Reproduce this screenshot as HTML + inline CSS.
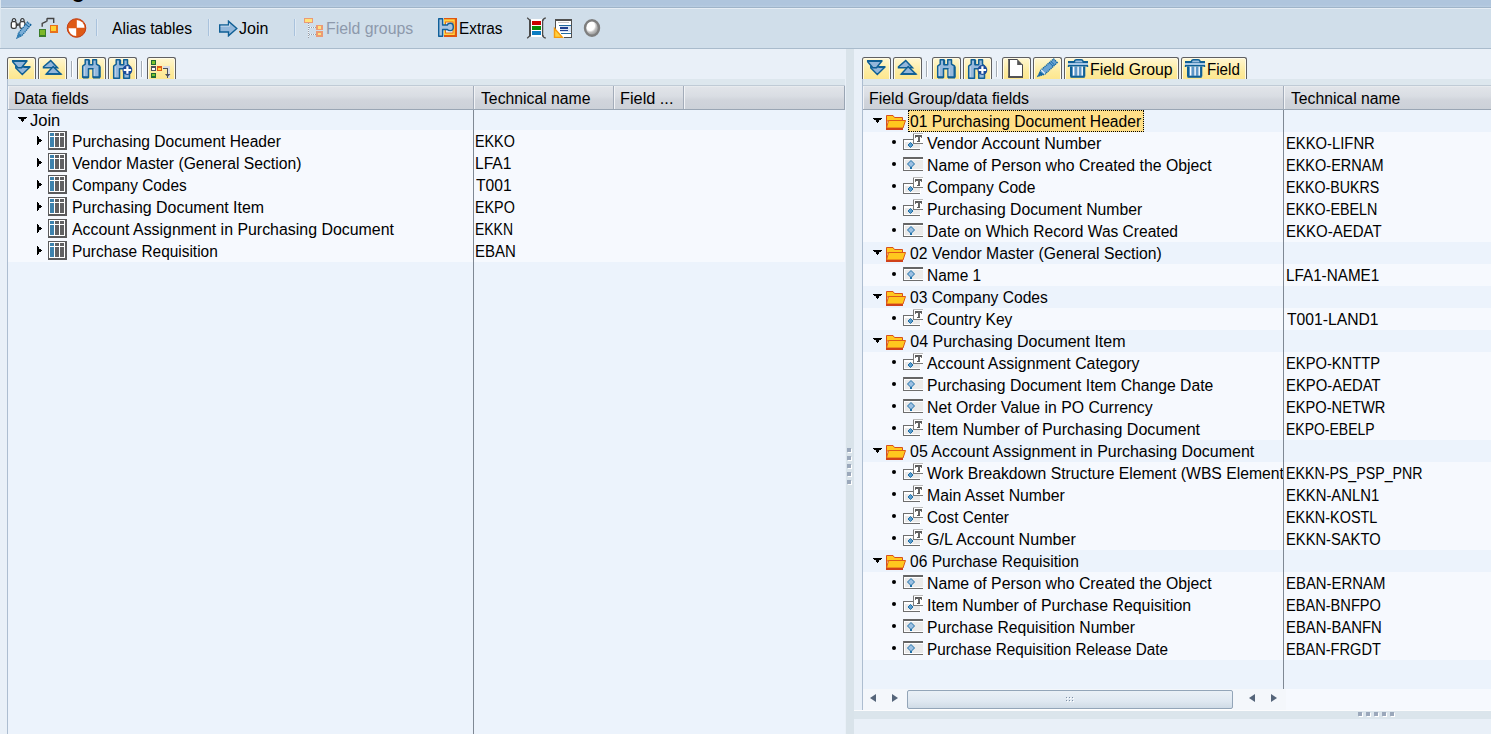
<!DOCTYPE html>
<html lang="en"><head><meta charset="utf-8"><title>InfoSet</title>
<style>
html,body{margin:0;padding:0}
body{width:1491px;height:734px;overflow:hidden;position:relative;background:#e9f0f8;font-family:"Liberation Sans","DejaVu Sans",sans-serif;font-size:16px;color:#000;}
i{display:block;position:absolute;font-style:normal}
svg{display:block}
.ic{position:absolute}
#titlebar{position:absolute;left:0;top:0;width:1491px;height:7px;background:linear-gradient(#afc5dd,#afc5dd 70%,#b9cde2);border-bottom:1px solid #9fb4c9;overflow:hidden}
#ttl{position:absolute;left:19.5px;top:-21.5px;font-size:21px;font-weight:bold;white-space:nowrap;line-height:24px}
#tb{position:absolute;left:0;top:8px;width:1491px;height:40px;background:#d0deea;border-bottom:1px solid #a9bbcc;box-shadow:inset 0 1px 0 #e6edf4}
#tb .ic{margin-top:-8px}
.tbt,.ht,.bl,.row .t,.row .k{transform-origin:0 0}
.tbt{position:absolute;top:11px;line-height:20px;white-space:nowrap}
.tbt.dis{color:#8d99ac}
.sep{top:11px;width:1px;height:17px;background:#a9c2dc;box-shadow:1px 0 0 #dfe9f3}
#lp{position:absolute;left:0;top:49px;width:846px;height:685px;overflow:hidden}
#rp{position:absolute;left:854px;top:49px;width:637px;height:685px;overflow:hidden}
#split{position:absolute;left:846px;top:49px;width:8px;height:685px;background:#d9e3ea}
#split i{left:1px;width:4px;height:4px;background:#9ba8bb;box-shadow:1px 1px 0 #fff}
.btn{position:absolute;top:8px;height:24px;box-sizing:border-box;border:1px solid #5f5f62;border-bottom:none;border-radius:2.5px 2.5px 0 0;background:linear-gradient(#fff7d2,#fdeb9e 60%,#fde58a);box-shadow:inset 1px 1px 0 #fffbe6,inset -1px 0 0 #fffbe6;white-space:nowrap}
.btn .bi{position:absolute;left:0;top:0}
.btn .bl{position:absolute;top:2px;line-height:20px}
.bsep{top:12px;width:1px;height:16px;background:#a3abb4;box-shadow:1px 0 0 #fff}
.tree{position:absolute;left:7px;top:30px;right:0;bottom:0;border-left:1px solid #adbdd0;background:#ecf3fc;overflow:hidden}
.tree:before{content:"";position:absolute;left:0;right:0;top:0;height:7px;background:#dde7ee}
.hd{position:absolute;left:0;right:0;top:7px;height:23px;border-bottom:1px solid #9aa6b4;background:linear-gradient(#eceff2,#e1e4e9 5%,#d9dde3 45%,#d1d5dc 60%,#ccd1d8);box-shadow:0 -1px 0 #c0cbd6, 0 2px 0 #f7f9fc}
.hc{position:absolute;top:0;height:23px;box-sizing:border-box;border-right:1px solid #a3acb9;border-left:1px solid #f1f3f6;overflow:hidden}
.ht{position:absolute;top:1px;line-height:23px;white-space:nowrap}
.hc.last{border-right:none}
.row{position:absolute;left:0;right:0;height:22px;background:#f6f9fe}
.row.g{background:#ecf3fc}
.row .t,.row .k{position:absolute;top:1px;line-height:22px;white-space:nowrap}
.c1{position:absolute;left:0;top:0;width:420px;height:22px;overflow:hidden}
.dn{width:9px;height:5px;background:linear-gradient(#000,#000) 0 0/9px 1px no-repeat,linear-gradient(#000,#000) 1px 1px/7px 1px no-repeat,linear-gradient(#000,#000) 3px 2px/3px 2px no-repeat,linear-gradient(#000,#000) 4px 4px/1px 1px no-repeat,linear-gradient(rgba(0,0,0,.12),rgba(0,0,0,.12)) 2px 2px/5px 1px no-repeat}
.rt{width:5px;height:9px;background:linear-gradient(#000,#000) 0 0/1px 9px no-repeat,linear-gradient(#000,#000) 1px 1px/1px 7px no-repeat,linear-gradient(#000,#000) 2px 3px/2px 3px no-repeat,linear-gradient(#000,#000) 4px 4px/1px 1px no-repeat,linear-gradient(rgba(0,0,0,.12),rgba(0,0,0,.12)) 2px 2px/1px 5px no-repeat}
.dot{width:4px;height:4px;border-radius:2px;background:#000}
.vline{width:1px;background:#7f8894}
.selbox{position:absolute;top:0;height:22px;box-sizing:border-box;background:#ffdf88;border:1px dotted #000}
#rt{left:8px;bottom:auto;height:631px}
#sb{position:absolute;left:0;top:610px;width:423px;height:21px;background:#f4f7fb}
#sb .thumb{position:absolute;left:44px;top:1px;width:324px;height:17px;border:1px solid #93a5b8;border-radius:2px;background:linear-gradient(#eaf0f6,#dfe8f1 60%,#cfdbe6);box-shadow:0 1px 0 #fff}
#sb .al{top:5px;width:0;height:0;border-top:4.5px solid transparent;border-bottom:4.5px solid transparent;border-right:6px solid #55657a}
#sb .ar{top:5px;width:0;height:0;border-top:4.5px solid transparent;border-bottom:4.5px solid transparent;border-left:6px solid #55657a}
#sbr{position:absolute;left:423px;right:0;top:610px;height:21px;background:#f6f9fe}
#hband{position:absolute;left:0;right:0;top:662px;height:8px;background:#dbe5ec;box-shadow:0 -1px 0 #fbfcfe}
#hband i{top:1px;width:4px;height:4px;background:#9ba8bb;box-shadow:1px 1px 0 #fff}

#lt{right:1px}
#lt .hd{border-right:1px solid #9aa6b4}
#sb .thumb b{position:absolute;left:158px;top:6px;width:1px;height:1px;background:#7d8ea3;box-shadow:3px 0 0 #7d8ea3,6px 0 0 #7d8ea3,0 3px 0 #7d8ea3,3px 3px 0 #7d8ea3,6px 3px 0 #7d8ea3,1px 1px 0 #fff,4px 1px 0 #fff,7px 1px 0 #fff,1px 4px 0 #fff,4px 4px 0 #fff,7px 4px 0 #fff}
#ledge{position:absolute;left:0;top:0;width:1px;height:48px;background:#dde7f0}

</style></head>
<body>
<div id="titlebar"><span id="ttl">Change InfoSet</span></div>
<div id="tb"><svg class="ic" style="left:10px;top:17px;" width="22" height="22" viewBox="0 0 22 22">
<g fill="none" stroke="#3a3a3a" stroke-width="1.200"><path d="M2.200 4.500 Q2.200 1.500 4 1.500 Q5.800 1.500 5.800 4.500"/><path d="M10.600 4.500 Q10.600 1.500 12.400 1.500 Q14.200 1.500 14.200 4.500"/></g>
<g fill="#fff" stroke="#3a3a3a" stroke-width="1.300"><rect x="1.300" y="4.700" width="5" height="6.600" rx="1.600"/><rect x="9.900" y="4.700" width="5" height="6.600" rx="1.600"/></g>
<path d="M6.300 7 H9.900 M7.300 7 V9 M8.900 7 V9" fill="none" stroke="#3a3a3a" stroke-width="1.200"/>
<path d="M20.900 7.900 L17.500 5.100 L8.500 15.800 L7 21 L11.900 18.600 Z" fill="#7aadd6" stroke="#10609a" stroke-width="1.200" stroke-dasharray="1.300 0.800"/><path d="M7 21 L8.500 15.800 L11.900 18.600 Z" fill="#2f7fb5"/><path d="M15.700 7.300 L19 10.100" stroke="#10609a" stroke-width="1"/>
</svg><svg class="ic" style="left:38px;top:17px;" width="22" height="22" viewBox="0 0 22 22" shape-rendering="crispEdges">
<path d="M4.200 9.800 V6.500 L8.500 4.300 M9 4.500 V1.300 M9 1.500 H15.700 V6" fill="none" stroke="#444" stroke-width="1.400" shape-rendering="auto"/>
<rect x="1" y="12" width="7" height="8" fill="#3b7d2b"/><rect x="2" y="13" width="5" height="5" fill="#7cb829"/>
<rect x="12" y="8" width="8" height="8" fill="#e8711c"/><rect x="13" y="9" width="5" height="5" fill="#ffd232"/>
</svg><svg class="ic" style="left:66px;top:17px;" width="22" height="22" viewBox="0 0 22 22">
<circle cx="10.500" cy="11" r="9.300" fill="#de5a15" stroke="#c43c12" stroke-width="1"/>
<path d="M10.800 10.700 V2.900 A8 8 0 0 1 18.500 10.700 Z" fill="#fff"/><path d="M10.200 11.300 V19.100 A8 8 0 0 1 2.500 11.300 Z" fill="#fff"/>
</svg><i class="sep" style="left:96px"></i><span id="tb1" class="tbt" style="left:112.00px;transform:scaleX(0.9779);">Alias tables</span><i class="sep" style="left:208px"></i><svg class="ic" style="left:219px;top:20px;" width="19" height="17" viewBox="0 0 19 17">
<path d="M0.700 5 H9.500 V1.200 L17.800 8.500 L9.500 15.800 V12 H0.700 Z" fill="#94b8db" stroke="#0f5f95" stroke-width="1.400" stroke-linejoin="miter"/>
<path d="M1.600 6.200 H10.500 V3.500" fill="none" stroke="#c3d8ec" stroke-width="1"/>
</svg><span id="tb2" class="tbt" style="left:239.00px;transform:scaleX(1.0010);">Join</span><i class="sep" style="left:294px"></i><svg class="ic" style="left:303px;top:17px;" width="22" height="22" viewBox="0 0 22 22" shape-rendering="crispEdges">
<rect x="1" y="1" width="9" height="5" fill="#eb9a74"/><rect x="2" y="2" width="7" height="3" fill="#ffe37a"/>
<path d="M5.500 6 V21 M6 10.500 H13 M6 17.500 H13" stroke="#f4f7fa" stroke-width="1" fill="none"/><path d="M5.500 6 V21 M6 10.500 H13 M6 17.500 H13" stroke="#9a9fa8" stroke-width="1" stroke-dasharray="1 1" fill="none"/>
<rect x="13" y="8" width="7" height="5" fill="#eb9a74"/><rect x="15" y="9" width="3" height="3" fill="#ffe37a"/>
<rect x="13" y="14" width="7" height="6" fill="#eb9a74"/><rect x="15" y="16" width="3" height="2" fill="#ffe37a"/>
</svg><span id="tb3" class="tbt dis" style="left:325.80px;transform:scaleX(0.9902);">Field groups</span><svg class="ic" style="left:437px;top:17px;" width="21" height="21" viewBox="0 0 21 21">
<rect x="7" y="1" width="13" height="19" fill="#ffd544"/>
<rect x="7" y="1" width="13" height="1.300" fill="#e0560f"/><rect x="17.800" y="1" width="2.200" height="19" fill="#e0560f"/><rect x="7" y="18" width="13" height="2" fill="#e0560f"/>
<rect x="8.500" y="5" width="7.500" height="11" fill="#e6eef6" stroke="#e8701a" stroke-width="1"/>
<path d="M1.700 1.700 H5.600 V8 H10.500 Q10.800 6.200 13.500 6.200 Q16.300 6.200 16.300 9.900 Q16.300 13.600 13.500 13.600 Q10.800 13.600 10.500 12.500 H5.600 V19.300 H1.700 Z" fill="#a8c4e0" stroke="#10609a" stroke-width="1.400" stroke-linejoin="round"/>
</svg><span id="tb4" class="tbt" style="left:459.00px;transform:scaleX(0.9597);">Extras</span><svg class="ic" style="left:526px;top:17px;" width="21" height="22" viewBox="0 0 21 22">
<rect x="5" y="2" width="11" height="18" fill="#fff"/>
<path d="M4 2.500 V19.500" stroke="#4a4a4a" stroke-width="2"/><path d="M1.200 0.800 L3.600 3 M1.200 21.200 L3.600 19" stroke="#4a4a4a" stroke-width="1.200"/>
<path d="M16.600 2.500 V19.500" stroke="#4a4a4a" stroke-width="1.300"/><path d="M19.800 0.800 Q17 1.500 16.800 4 M19.800 21.200 Q17 20.500 16.800 18" stroke="#4a4a4a" stroke-width="1.200" fill="none"/>
<g shape-rendering="crispEdges"><rect x="6" y="4" width="9" height="4" fill="#cc0000"/><rect x="6" y="9" width="9" height="4" fill="#0a8a0a"/><rect x="6" y="14" width="9" height="4" fill="#0a7dc2"/></g>
</svg><svg class="ic" style="left:553px;top:18px;" width="20" height="20" viewBox="0 0 20 20" shape-rendering="crispEdges">
<rect x="2" y="1" width="17" height="19" fill="#fff"/>
<path d="M2 2 H19" stroke="#505050" stroke-width="2"/><path d="M2.500 1 V12 M18.500 1 V20 M11 19.500 H19" stroke="#505050" stroke-width="1" fill="none"/>
<rect x="5" y="4" width="11" height="1" fill="#c8c8c8"/>
<rect x="6" y="7" width="12" height="1" fill="#1f6a9f"/><rect x="7" y="8" width="11" height="6" fill="#d7e4f3"/>
<rect x="7" y="9" width="8" height="2" fill="#1e3f8f"/><rect x="7" y="12" width="8" height="1" fill="#1e3f8f"/><rect x="8" y="15" width="10" height="1" fill="#1f6a9f"/>
<path d="M1.500 10.500 L9.500 19.500 H1.500 Z" fill="#ffd040" stroke="#f59a0d" stroke-width="1.400" shape-rendering="auto"/>
</svg><svg class="ic" style="left:582px;top:18px;" width="20" height="20" viewBox="0 0 20 20">
<defs><radialGradient id="bg1" cx="0.380" cy="0.360" r="0.600"><stop offset="0" stop-color="#fff"/><stop offset="0.500" stop-color="#fff"/><stop offset="0.700" stop-color="#c2c2c2"/><stop offset="1" stop-color="#9c9c9c"/></radialGradient></defs>
<ellipse cx="10" cy="10" rx="7" ry="7.700" fill="url(#bg1)" stroke="#7e7e7e" stroke-width="2.400"/>
</svg></div>
<div id="lp">
<div class="btn" style="left:7px;width:29px"><svg class="bi" width="27" height="22" viewBox="0 0 27 22">
<g fill="#93b6da" stroke="#0f5f95" stroke-width="1.500" stroke-linejoin="miter"><path d="M7.800 8.800 H21.500 V9.500 L14.300 16.500 L7.800 10 Z"/><path d="M4.700 2.800 H18.500 V3.500 L13.500 9.800 H9.800 L4.700 3.800 Z"/></g>
<path d="M4 3 H19.300" stroke="#0f5f95" stroke-width="2"/><path d="M15.500 9 H22.300" stroke="#0f5f95" stroke-width="2"/>
</svg></div><div class="btn" style="left:38px;width:29px"><svg class="bi" width="27" height="22" viewBox="0 0 27 22">
<g fill="#93b6da" stroke="#0f5f95" stroke-width="1.500" stroke-linejoin="miter"><path d="M11.700 2.600 L18.500 9.700 H4.500 V8.800 Z"/><path d="M14.200 8.600 L21.800 16 H7.300 Z"/></g>
<path d="M7 16 H22.300" stroke="#0f5f95" stroke-width="1.800"/>
</svg></div><i class="bsep" style="left:71px"></i><div class="btn" style="left:77px;width:29px"><svg class="bi" width="27" height="22" viewBox="0 0 27 22">
<path d="M7.200 1.700 H11 V6.700 H14.700 V1.700 H18.500 V6.200 L21.500 8 V19.300 H15 V10.700 H10.500 V19.300 H4.700 V8 L7.200 6.200 Z" fill="#97b9dc" stroke="#0f5f95" stroke-width="1.500" stroke-linejoin="round"/>
<path d="M5 19.500 H10.500 M15 19.500 H22 M21.700 8.500 V19.500 M11.200 2 V6.500" stroke="#0f5f95" stroke-width="2"/>
<path d="M6.300 8.500 V18 M16.200 11 V18" stroke="#bdd3ea" stroke-width="1.200"/>
</svg></div><div class="btn" style="left:108px;width:29px"><svg class="bi" width="27" height="22" viewBox="0 0 27 22">
<path d="M7.200 1.700 H11 V6.700 H14.700 V1.700 H18.500 V6.200 L20.500 8 V20.300 H14.700 V10.700 H10.500 V20.300 H4.700 V8 L7.200 6.200 Z" fill="#97b9dc" stroke="#0f5f95" stroke-width="1.500" stroke-linejoin="round"/>
<path d="M11.200 2 V6.500" stroke="#0f5f95" stroke-width="2"/>
<path d="M6.300 8.500 V19 M16.200 8 V10" stroke="#bdd3ea" stroke-width="1.200"/>
<circle cx="18.400" cy="12" r="4.900" fill="#1b4a9a"/><path d="M18.400 8.300 V15.700 M14.700 12 H22.100" stroke="#fff" stroke-width="2.200"/>
</svg></div><i class="bsep" style="left:141px"></i><div class="btn" style="left:147px;width:29px"><svg class="bi" width="27" height="22" viewBox="0 0 27 22" shape-rendering="crispEdges">
<rect x="3" y="2" width="5" height="5" fill="#1f6b35"/><rect x="4" y="3" width="3" height="3" fill="#7cc42a"/>
<rect x="3" y="8" width="5" height="5" fill="#4a4f5c"/><rect x="4" y="10" width="3" height="2" fill="#fff"/>
<rect x="9" y="8" width="5" height="5" fill="#e05a1a"/><rect x="10" y="10" width="3" height="2" fill="#ffd83a"/>
<rect x="3" y="15" width="5" height="5" fill="#1f6b35"/><rect x="4" y="16" width="3" height="2" fill="#7cc42a"/>
<path d="M15 8 H22 V20 H20 V11 H15 Z" fill="#d9dce4"/>
<path d="M15 10.500 H19.500 V19.500" stroke="#4a4f5c" stroke-width="1" fill="none"/><path d="M17 16 H22.500 L19.500 19 Z" fill="#4a4f5c" shape-rendering="auto"/>
</svg></div><div class="tree" id="lt">
<div class="hd"><div class="hc" style="left:0;width:466px"><span id="lh1" class="ht" style="left:5.00px;transform:scaleX(0.9879);">Data fields</span></div><div class="hc" style="left:466px;width:140px"><span id="lh2" class="ht" style="left:6.00px;transform:scaleX(0.9839);">Technical name</span></div><div class="hc" style="left:606px;width:70px"><span id="lh3" class="ht" style="left:5.00px;transform:scaleX(1.0180);">Field ...</span></div><div class="hc last" style="left:676px;right:0"></div></div>
<div class="row g" style="top:31px;height:20px"><i class="dn" style="left:10px;top:7px"></i><span id="lj" class="t" style="left:22.00px;transform:scaleX(1.0322);line-height:20px;">Join</span></div>
<div class="row" style="top:51px"><i class="rt" style="left:29px;top:6px"></i><svg class="ic" style="left:40px;top:1px;" width="19" height="19" viewBox="0 0 19 19" shape-rendering="crispEdges">
<rect x="0" y="0" width="19" height="19" fill="#5a5a5c"/><rect x="1" y="1" width="16" height="16" fill="#fff"/>
<rect x="2" y="2" width="4" height="3" fill="#3d82ad"/><rect x="2" y="6" width="4" height="10" fill="#3d82ad"/>
<rect x="7" y="2" width="4" height="3" fill="#606062"/><rect x="7" y="6" width="4" height="10" fill="#606062"/>
<rect x="12" y="2" width="4" height="3" fill="#606062"/><rect x="12" y="6" width="4" height="10" fill="#606062"/>
</svg><span id="ln0" class="t" style="left:64.00px;transform:scaleX(0.9747);">Purchasing Document Header</span><span id="lk0" class="k" style="left:467.20px;transform:scaleX(0.8959);">EKKO</span></div>
<div class="row" style="top:73px"><i class="rt" style="left:29px;top:6px"></i><svg class="ic" style="left:40px;top:1px;" width="19" height="19" viewBox="0 0 19 19" shape-rendering="crispEdges">
<rect x="0" y="0" width="19" height="19" fill="#5a5a5c"/><rect x="1" y="1" width="16" height="16" fill="#fff"/>
<rect x="2" y="2" width="4" height="3" fill="#3d82ad"/><rect x="2" y="6" width="4" height="10" fill="#3d82ad"/>
<rect x="7" y="2" width="4" height="3" fill="#606062"/><rect x="7" y="6" width="4" height="10" fill="#606062"/>
<rect x="12" y="2" width="4" height="3" fill="#606062"/><rect x="12" y="6" width="4" height="10" fill="#606062"/>
</svg><span id="ln1" class="t" style="left:64.00px;transform:scaleX(0.9807);">Vendor Master (General Section)</span><span id="lk1" class="k" style="left:467.20px;transform:scaleX(0.9760);">LFA1</span></div>
<div class="row" style="top:95px"><i class="rt" style="left:29px;top:6px"></i><svg class="ic" style="left:40px;top:1px;" width="19" height="19" viewBox="0 0 19 19" shape-rendering="crispEdges">
<rect x="0" y="0" width="19" height="19" fill="#5a5a5c"/><rect x="1" y="1" width="16" height="16" fill="#fff"/>
<rect x="2" y="2" width="4" height="3" fill="#3d82ad"/><rect x="2" y="6" width="4" height="10" fill="#3d82ad"/>
<rect x="7" y="2" width="4" height="3" fill="#606062"/><rect x="7" y="6" width="4" height="10" fill="#606062"/>
<rect x="12" y="2" width="4" height="3" fill="#606062"/><rect x="12" y="6" width="4" height="10" fill="#606062"/>
</svg><span id="ln2" class="t" style="left:64.00px;transform:scaleX(0.9620);">Company Codes</span><span id="lk2" class="k" style="left:468.20px;transform:scaleX(0.9759);">T001</span></div>
<div class="row" style="top:117px"><i class="rt" style="left:29px;top:6px"></i><svg class="ic" style="left:40px;top:1px;" width="19" height="19" viewBox="0 0 19 19" shape-rendering="crispEdges">
<rect x="0" y="0" width="19" height="19" fill="#5a5a5c"/><rect x="1" y="1" width="16" height="16" fill="#fff"/>
<rect x="2" y="2" width="4" height="3" fill="#3d82ad"/><rect x="2" y="6" width="4" height="10" fill="#3d82ad"/>
<rect x="7" y="2" width="4" height="3" fill="#606062"/><rect x="7" y="6" width="4" height="10" fill="#606062"/>
<rect x="12" y="2" width="4" height="3" fill="#606062"/><rect x="12" y="6" width="4" height="10" fill="#606062"/>
</svg><span id="ln3" class="t" style="left:64.00px;transform:scaleX(0.9953);">Purchasing Document Item</span><span id="lk3" class="k" style="left:467.20px;transform:scaleX(0.8959);">EKPO</span></div>
<div class="row" style="top:139px"><i class="rt" style="left:29px;top:6px"></i><svg class="ic" style="left:40px;top:1px;" width="19" height="19" viewBox="0 0 19 19" shape-rendering="crispEdges">
<rect x="0" y="0" width="19" height="19" fill="#5a5a5c"/><rect x="1" y="1" width="16" height="16" fill="#fff"/>
<rect x="2" y="2" width="4" height="3" fill="#3d82ad"/><rect x="2" y="6" width="4" height="10" fill="#3d82ad"/>
<rect x="7" y="2" width="4" height="3" fill="#606062"/><rect x="7" y="6" width="4" height="10" fill="#606062"/>
<rect x="12" y="2" width="4" height="3" fill="#606062"/><rect x="12" y="6" width="4" height="10" fill="#606062"/>
</svg><span id="ln4" class="t" style="left:64.00px;transform:scaleX(0.9945);">Account Assignment in Purchasing Document</span><span id="lk4" class="k" style="left:467.20px;transform:scaleX(0.8720);">EKKN</span></div>
<div class="row" style="top:161px"><i class="rt" style="left:29px;top:6px"></i><svg class="ic" style="left:40px;top:1px;" width="19" height="19" viewBox="0 0 19 19" shape-rendering="crispEdges">
<rect x="0" y="0" width="19" height="19" fill="#5a5a5c"/><rect x="1" y="1" width="16" height="16" fill="#fff"/>
<rect x="2" y="2" width="4" height="3" fill="#3d82ad"/><rect x="2" y="6" width="4" height="10" fill="#3d82ad"/>
<rect x="7" y="2" width="4" height="3" fill="#606062"/><rect x="7" y="6" width="4" height="10" fill="#606062"/>
<rect x="12" y="2" width="4" height="3" fill="#606062"/><rect x="12" y="6" width="4" height="10" fill="#606062"/>
</svg><span id="ln5" class="t" style="left:64.00px;transform:scaleX(0.9638);">Purchase Requisition</span><span id="lk5" class="k" style="left:467.20px;transform:scaleX(0.9365);">EBAN</span></div>
<i class="vline" style="left:465px;top:31px;bottom:0"></i></div>
</div>
<div id="split"><i style="top:399px"></i><i style="top:407px"></i><i style="top:415px"></i><i style="top:423px"></i><i style="top:431px"></i></div>
<div id="rp">
<div class="btn" style="left:8px;width:29px"><svg class="bi" width="27" height="22" viewBox="0 0 27 22">
<g fill="#93b6da" stroke="#0f5f95" stroke-width="1.500" stroke-linejoin="miter"><path d="M7.800 8.800 H21.500 V9.500 L14.300 16.500 L7.800 10 Z"/><path d="M4.700 2.800 H18.500 V3.500 L13.500 9.800 H9.800 L4.700 3.800 Z"/></g>
<path d="M4 3 H19.300" stroke="#0f5f95" stroke-width="2"/><path d="M15.500 9 H22.300" stroke="#0f5f95" stroke-width="2"/>
</svg></div><div class="btn" style="left:39px;width:29px"><svg class="bi" width="27" height="22" viewBox="0 0 27 22">
<g fill="#93b6da" stroke="#0f5f95" stroke-width="1.500" stroke-linejoin="miter"><path d="M11.700 2.600 L18.500 9.700 H4.500 V8.800 Z"/><path d="M14.200 8.600 L21.800 16 H7.300 Z"/></g>
<path d="M7 16 H22.300" stroke="#0f5f95" stroke-width="1.800"/>
</svg></div><i class="bsep" style="left:72px"></i><div class="btn" style="left:78px;width:29px"><svg class="bi" width="27" height="22" viewBox="0 0 27 22">
<path d="M7.200 1.700 H11 V6.700 H14.700 V1.700 H18.500 V6.200 L21.500 8 V19.300 H15 V10.700 H10.500 V19.300 H4.700 V8 L7.200 6.200 Z" fill="#97b9dc" stroke="#0f5f95" stroke-width="1.500" stroke-linejoin="round"/>
<path d="M5 19.500 H10.500 M15 19.500 H22 M21.700 8.500 V19.500 M11.200 2 V6.500" stroke="#0f5f95" stroke-width="2"/>
<path d="M6.300 8.500 V18 M16.200 11 V18" stroke="#bdd3ea" stroke-width="1.200"/>
</svg></div><div class="btn" style="left:109px;width:29px"><svg class="bi" width="27" height="22" viewBox="0 0 27 22">
<path d="M7.200 1.700 H11 V6.700 H14.700 V1.700 H18.500 V6.200 L20.500 8 V20.300 H14.700 V10.700 H10.500 V20.300 H4.700 V8 L7.200 6.200 Z" fill="#97b9dc" stroke="#0f5f95" stroke-width="1.500" stroke-linejoin="round"/>
<path d="M11.200 2 V6.500" stroke="#0f5f95" stroke-width="2"/>
<path d="M6.300 8.500 V19 M16.200 8 V10" stroke="#bdd3ea" stroke-width="1.200"/>
<circle cx="18.400" cy="12" r="4.900" fill="#1b4a9a"/><path d="M18.400 8.300 V15.700 M14.700 12 H22.100" stroke="#fff" stroke-width="2.200"/>
</svg></div><i class="bsep" style="left:142px"></i><div class="btn" style="left:148px;width:29px"><svg class="bi" width="27" height="22" viewBox="0 0 27 22">
<path d="M6 1.500 H14.500 L19.500 6.500 V19 H6 Z" fill="#fff"/><path d="M6.100 1 V19" stroke="#4a4a4e" stroke-width="1.800"/><path d="M5.200 19 H20" stroke="#4a4a4e" stroke-width="1.900"/><path d="M5.200 1.500 H14.500" stroke="#4a4a4e" stroke-width="1"/><path d="M19.500 6.500 V19" stroke="#4a4a4e" stroke-width="1"/>
<path d="M14.200 1 L20 6.900 H14.200 Z" fill="#555"/>
</svg></div><div class="btn" style="left:179px;width:29px"><svg class="bi" width="27" height="22" viewBox="0 0 27 22">
<path d="M23.300 4.600 L19.600 0.900 L6.900 12 L4 18.200 L10.900 16.200 Z" fill="#6aa3d3" stroke="#1467a3" stroke-width="1.300" stroke-dasharray="1.300 0.700"/><path d="M4 18.200 L6 13.200 L9.800 16.500 Z" fill="#1467a3"/><path d="M16.800 3.300 L20.600 7 M15.300 4.600 L19.100 8.300" stroke="#1467a3" stroke-width="1"/><path d="M7.200 11.900 L10.900 15.600" stroke="#eef4fa" stroke-width="1.200"/>
</svg></div><div class="btn" style="left:210px;width:115px"><svg class="bi" width="27" height="22" viewBox="0 0 27 22">
<path d="M9.500 3.500 Q9.500 1.700 11.500 1.700 H16 Q18 1.700 18 3.500 V5 H9.500 Z" fill="#9cbfe0" stroke="#0f5f95" stroke-width="1.400"/>
<rect x="3" y="4.800" width="20" height="2.400" fill="#a9c8e6"/>
<path d="M3 4 H9.500 M18 4 H23" stroke="#0f5f95" stroke-width="1.800"/><path d="M3 7.700 H23 M3.500 7.500 V9 M22.500 7.500 V9" stroke="#0f5f95" stroke-width="1.400" fill="none"/>
<rect x="5" y="8.400" width="15.200" height="10" fill="#5f97c8"/>
<path d="M6 8.400 V18.500 M19.200 8.400 V18.500" stroke="#0f5f95" stroke-width="2"/><path d="M5.500 18.800 H19.700" stroke="#0f5f95" stroke-width="2"/>
<path d="M8.700 8.800 V17.400 M13.100 8.800 V17.400 M17.200 8.800 V17.400" stroke="#fff" stroke-width="1.400"/>
</svg><span id="b1" class="bl" style="left:25.00px;transform:scaleX(0.9890);">Field Group</span></div><div class="btn" style="left:327px;width:66px"><svg class="bi" width="27" height="22" viewBox="0 0 27 22">
<path d="M9.500 3.500 Q9.500 1.700 11.500 1.700 H16 Q18 1.700 18 3.500 V5 H9.500 Z" fill="#9cbfe0" stroke="#0f5f95" stroke-width="1.400"/>
<rect x="3" y="4.800" width="20" height="2.400" fill="#a9c8e6"/>
<path d="M3 4 H9.500 M18 4 H23" stroke="#0f5f95" stroke-width="1.800"/><path d="M3 7.700 H23 M3.500 7.500 V9 M22.500 7.500 V9" stroke="#0f5f95" stroke-width="1.400" fill="none"/>
<rect x="5" y="8.400" width="15.200" height="10" fill="#5f97c8"/>
<path d="M6 8.400 V18.500 M19.200 8.400 V18.500" stroke="#0f5f95" stroke-width="2"/><path d="M5.500 18.800 H19.700" stroke="#0f5f95" stroke-width="2"/>
<path d="M8.700 8.800 V17.400 M13.100 8.800 V17.400 M17.200 8.800 V17.400" stroke="#fff" stroke-width="1.400"/>
</svg><span id="b2" class="bl" style="left:24.50px;transform:scaleX(0.9465);">Field</span></div><div class="tree" id="rt">
<div class="hd"><div class="hc" style="left:0;width:421px"><span id="rh1" class="ht" style="left:5.00px;transform:scaleX(0.9944);">Field Group/data fields</span></div><div class="hc last" style="left:421px;right:0"><span id="rh2" class="ht" style="left:6.00px;transform:scaleX(0.9838);">Technical name</span></div></div>
<div class="row g" style="top:31px"><i class="dn" style="left:10px;top:8px"></i><svg class="ic" style="left:23px;top:5px;" width="21" height="15" viewBox="0 0 21 15">
<path d="M0.500 0.500 H7 L8.500 2.500 H16.500 V6 H0.500 Z" fill="#ffc81e" stroke="#d9501a" stroke-width="1"/>
<path d="M0.500 5 V13.500" stroke="#d9501a" stroke-width="1"/>
<path d="M2.500 5.500 H19.500 L17 13 H0.500 Z" fill="#ffc81e" stroke="#de5a18" stroke-width="1"/>
<path d="M0 14 H17" stroke="#d0421a" stroke-width="2"/>
</svg><span class="selbox" style="left:45px;width:236px"></span><span id="rn0" class="t" style="left:47.30px;transform:scaleX(0.9770);">01 Purchasing Document Header</span></div>
<div class="row" style="top:53px"><div class="c1"><i class="dot" style="left:29px;top:8px"></i><svg class="ic" style="left:40px;top:1px;" width="20" height="18" viewBox="0 0 20 18" shape-rendering="crispEdges">
<rect x="0" y="6" width="18" height="11" fill="#fff"/><rect x="2" y="9" width="15" height="6" fill="#eaeaea"/>
<path d="M0.500 17 V6.500 H10 M0 16.500 H17" stroke="#6e6e6e" stroke-width="1" fill="none"/>
<path d="M7.500 9.500 L10 12 L7.500 14.500 L5 12 Z" fill="#5a9bcc" stroke="#1f70a8" stroke-width="1" shape-rendering="auto"/>
<rect x="10" y="0" width="10" height="11" fill="#fff"/><path d="M10.500 0 V10.500 H20" stroke="#7a7a7a" stroke-width="1" fill="none"/><path d="M10 0.500 H20" stroke="#bbb" stroke-width="1"/>
<path d="M12 3 H19" stroke="#5c5c5c" stroke-width="2" fill="none"/><path d="M15.500 3 V9" stroke="#666" stroke-width="2" fill="none"/><rect x="14" y="8" width="3" height="1" fill="#5c5c5c"/><rect x="12" y="4" width="1" height="1" fill="#777"/><rect x="18" y="4" width="1" height="1" fill="#777"/>
</svg><span id="rn1" class="t" style="left:63.50px;transform:scaleX(1.0052);">Vendor Account Number</span></div><span id="rk1" class="k" style="left:422.70px;transform:scaleX(0.9243);">EKKO-LIFNR</span></div>
<div class="row" style="top:75px"><div class="c1"><i class="dot" style="left:29px;top:8px"></i><svg class="ic" style="left:40px;top:3px;" width="20" height="15" viewBox="0 0 20 15" shape-rendering="crispEdges">
<rect x="0" y="0" width="20" height="14" fill="#fff"/><rect x="2" y="3" width="18" height="9" fill="#eaeaea"/>
<path d="M0 1 H20" stroke="#666" stroke-width="2"/><path d="M0.500 0 V14 M0 13.500 H20" stroke="#6e6e6e" stroke-width="1" fill="none"/>
<path d="M8 3.500 L11.500 7 L8 10.500 L4.500 7 Z" fill="#9dc0e2" stroke="#1f70a8" stroke-width="1" shape-rendering="auto"/><rect x="7" y="10" width="2" height="2" fill="#1f70a8"/>
</svg><span id="rn2" class="t" style="left:63.50px;transform:scaleX(0.9875);">Name of Person who Created the Object</span></div><span id="rk2" class="k" style="left:422.70px;transform:scaleX(0.9065);">EKKO-ERNAM</span></div>
<div class="row" style="top:97px"><div class="c1"><i class="dot" style="left:29px;top:8px"></i><svg class="ic" style="left:40px;top:1px;" width="20" height="18" viewBox="0 0 20 18" shape-rendering="crispEdges">
<rect x="0" y="6" width="18" height="11" fill="#fff"/><rect x="2" y="9" width="15" height="6" fill="#eaeaea"/>
<path d="M0.500 17 V6.500 H10 M0 16.500 H17" stroke="#6e6e6e" stroke-width="1" fill="none"/>
<path d="M7.500 9.500 L10 12 L7.500 14.500 L5 12 Z" fill="#5a9bcc" stroke="#1f70a8" stroke-width="1" shape-rendering="auto"/>
<rect x="10" y="0" width="10" height="11" fill="#fff"/><path d="M10.500 0 V10.500 H20" stroke="#7a7a7a" stroke-width="1" fill="none"/><path d="M10 0.500 H20" stroke="#bbb" stroke-width="1"/>
<path d="M12 3 H19" stroke="#5c5c5c" stroke-width="2" fill="none"/><path d="M15.500 3 V9" stroke="#666" stroke-width="2" fill="none"/><rect x="14" y="8" width="3" height="1" fill="#5c5c5c"/><rect x="12" y="4" width="1" height="1" fill="#777"/><rect x="18" y="4" width="1" height="1" fill="#777"/>
</svg><span id="rn3" class="t" style="left:63.50px;transform:scaleX(0.9754);">Company Code</span></div><span id="rk3" class="k" style="left:422.70px;transform:scaleX(0.8875);">EKKO-BUKRS</span></div>
<div class="row" style="top:119px"><div class="c1"><i class="dot" style="left:29px;top:8px"></i><svg class="ic" style="left:40px;top:1px;" width="20" height="18" viewBox="0 0 20 18" shape-rendering="crispEdges">
<rect x="0" y="6" width="18" height="11" fill="#fff"/><rect x="2" y="9" width="15" height="6" fill="#eaeaea"/>
<path d="M0.500 17 V6.500 H10 M0 16.500 H17" stroke="#6e6e6e" stroke-width="1" fill="none"/>
<path d="M7.500 9.500 L10 12 L7.500 14.500 L5 12 Z" fill="#5a9bcc" stroke="#1f70a8" stroke-width="1" shape-rendering="auto"/>
<rect x="10" y="0" width="10" height="11" fill="#fff"/><path d="M10.500 0 V10.500 H20" stroke="#7a7a7a" stroke-width="1" fill="none"/><path d="M10 0.500 H20" stroke="#bbb" stroke-width="1"/>
<path d="M12 3 H19" stroke="#5c5c5c" stroke-width="2" fill="none"/><path d="M15.500 3 V9" stroke="#666" stroke-width="2" fill="none"/><rect x="14" y="8" width="3" height="1" fill="#5c5c5c"/><rect x="12" y="4" width="1" height="1" fill="#777"/><rect x="18" y="4" width="1" height="1" fill="#777"/>
</svg><span id="rn4" class="t" style="left:63.50px;transform:scaleX(0.9835);">Purchasing Document Number</span></div><span id="rk4" class="k" style="left:422.70px;transform:scaleX(0.8931);">EKKO-EBELN</span></div>
<div class="row" style="top:141px"><div class="c1"><i class="dot" style="left:29px;top:8px"></i><svg class="ic" style="left:40px;top:3px;" width="20" height="15" viewBox="0 0 20 15" shape-rendering="crispEdges">
<rect x="0" y="0" width="20" height="14" fill="#fff"/><rect x="2" y="3" width="18" height="9" fill="#eaeaea"/>
<path d="M0 1 H20" stroke="#666" stroke-width="2"/><path d="M0.500 0 V14 M0 13.500 H20" stroke="#6e6e6e" stroke-width="1" fill="none"/>
<path d="M8 3.500 L11.500 7 L8 10.500 L4.500 7 Z" fill="#9dc0e2" stroke="#1f70a8" stroke-width="1" shape-rendering="auto"/><rect x="7" y="10" width="2" height="2" fill="#1f70a8"/>
</svg><span id="rn5" class="t" style="left:63.50px;transform:scaleX(0.9720);">Date on Which Record Was Created</span></div><span id="rk5" class="k" style="left:422.70px;transform:scaleX(0.9377);">EKKO-AEDAT</span></div>
<div class="row g" style="top:163px"><i class="dn" style="left:10px;top:8px"></i><svg class="ic" style="left:23px;top:5px;" width="21" height="15" viewBox="0 0 21 15">
<path d="M0.500 0.500 H7 L8.500 2.500 H16.500 V6 H0.500 Z" fill="#ffc81e" stroke="#d9501a" stroke-width="1"/>
<path d="M0.500 5 V13.500" stroke="#d9501a" stroke-width="1"/>
<path d="M2.500 5.500 H19.500 L17 13 H0.500 Z" fill="#ffc81e" stroke="#de5a18" stroke-width="1"/>
<path d="M0 14 H17" stroke="#d0421a" stroke-width="2"/>
</svg><span id="rn6" class="t" style="left:47.30px;transform:scaleX(0.9824);">02 Vendor Master (General Section)</span></div>
<div class="row" style="top:185px"><div class="c1"><i class="dot" style="left:29px;top:8px"></i><svg class="ic" style="left:40px;top:3px;" width="20" height="15" viewBox="0 0 20 15" shape-rendering="crispEdges">
<rect x="0" y="0" width="20" height="14" fill="#fff"/><rect x="2" y="3" width="18" height="9" fill="#eaeaea"/>
<path d="M0 1 H20" stroke="#666" stroke-width="2"/><path d="M0.500 0 V14 M0 13.500 H20" stroke="#6e6e6e" stroke-width="1" fill="none"/>
<path d="M8 3.500 L11.500 7 L8 10.500 L4.500 7 Z" fill="#9dc0e2" stroke="#1f70a8" stroke-width="1" shape-rendering="auto"/><rect x="7" y="10" width="2" height="2" fill="#1f70a8"/>
</svg><span id="rn7" class="t" style="left:63.50px;transform:scaleX(0.9672);">Name 1</span></div><span id="rk7" class="k" style="left:422.70px;transform:scaleX(0.9532);">LFA1-NAME1</span></div>
<div class="row g" style="top:207px"><i class="dn" style="left:10px;top:8px"></i><svg class="ic" style="left:23px;top:5px;" width="21" height="15" viewBox="0 0 21 15">
<path d="M0.500 0.500 H7 L8.500 2.500 H16.500 V6 H0.500 Z" fill="#ffc81e" stroke="#d9501a" stroke-width="1"/>
<path d="M0.500 5 V13.500" stroke="#d9501a" stroke-width="1"/>
<path d="M2.500 5.500 H19.500 L17 13 H0.500 Z" fill="#ffc81e" stroke="#de5a18" stroke-width="1"/>
<path d="M0 14 H17" stroke="#d0421a" stroke-width="2"/>
</svg><span id="rn8" class="t" style="left:47.30px;transform:scaleX(0.9744);">03 Company Codes</span></div>
<div class="row" style="top:229px"><div class="c1"><i class="dot" style="left:29px;top:8px"></i><svg class="ic" style="left:40px;top:1px;" width="20" height="18" viewBox="0 0 20 18" shape-rendering="crispEdges">
<rect x="0" y="6" width="18" height="11" fill="#fff"/><rect x="2" y="9" width="15" height="6" fill="#eaeaea"/>
<path d="M0.500 17 V6.500 H10 M0 16.500 H17" stroke="#6e6e6e" stroke-width="1" fill="none"/>
<path d="M7.500 9.500 L10 12 L7.500 14.500 L5 12 Z" fill="#5a9bcc" stroke="#1f70a8" stroke-width="1" shape-rendering="auto"/>
<rect x="10" y="0" width="10" height="11" fill="#fff"/><path d="M10.500 0 V10.500 H20" stroke="#7a7a7a" stroke-width="1" fill="none"/><path d="M10 0.500 H20" stroke="#bbb" stroke-width="1"/>
<path d="M12 3 H19" stroke="#5c5c5c" stroke-width="2" fill="none"/><path d="M15.500 3 V9" stroke="#666" stroke-width="2" fill="none"/><rect x="14" y="8" width="3" height="1" fill="#5c5c5c"/><rect x="12" y="4" width="1" height="1" fill="#777"/><rect x="18" y="4" width="1" height="1" fill="#777"/>
</svg><span id="rn9" class="t" style="left:63.50px;transform:scaleX(0.9693);">Country Key</span></div><span id="rk9" class="k" style="left:423.90px;transform:scaleX(0.9807);">T001-LAND1</span></div>
<div class="row g" style="top:251px"><i class="dn" style="left:10px;top:8px"></i><svg class="ic" style="left:23px;top:5px;" width="21" height="15" viewBox="0 0 21 15">
<path d="M0.500 0.500 H7 L8.500 2.500 H16.500 V6 H0.500 Z" fill="#ffc81e" stroke="#d9501a" stroke-width="1"/>
<path d="M0.500 5 V13.500" stroke="#d9501a" stroke-width="1"/>
<path d="M2.500 5.500 H19.500 L17 13 H0.500 Z" fill="#ffc81e" stroke="#de5a18" stroke-width="1"/>
<path d="M0 14 H17" stroke="#d0421a" stroke-width="2"/>
</svg><span id="rn10" class="t" style="left:47.30px;">04 Purchasing Document Item</span></div>
<div class="row" style="top:273px"><div class="c1"><i class="dot" style="left:29px;top:8px"></i><svg class="ic" style="left:40px;top:1px;" width="20" height="18" viewBox="0 0 20 18" shape-rendering="crispEdges">
<rect x="0" y="6" width="18" height="11" fill="#fff"/><rect x="2" y="9" width="15" height="6" fill="#eaeaea"/>
<path d="M0.500 17 V6.500 H10 M0 16.500 H17" stroke="#6e6e6e" stroke-width="1" fill="none"/>
<path d="M7.500 9.500 L10 12 L7.500 14.500 L5 12 Z" fill="#5a9bcc" stroke="#1f70a8" stroke-width="1" shape-rendering="auto"/>
<rect x="10" y="0" width="10" height="11" fill="#fff"/><path d="M10.500 0 V10.500 H20" stroke="#7a7a7a" stroke-width="1" fill="none"/><path d="M10 0.500 H20" stroke="#bbb" stroke-width="1"/>
<path d="M12 3 H19" stroke="#5c5c5c" stroke-width="2" fill="none"/><path d="M15.500 3 V9" stroke="#666" stroke-width="2" fill="none"/><rect x="14" y="8" width="3" height="1" fill="#5c5c5c"/><rect x="12" y="4" width="1" height="1" fill="#777"/><rect x="18" y="4" width="1" height="1" fill="#777"/>
</svg><span id="rn11" class="t" style="left:63.50px;transform:scaleX(0.9916);">Account Assignment Category</span></div><span id="rk11" class="k" style="left:422.70px;transform:scaleX(0.9199);">EKPO-KNTTP</span></div>
<div class="row" style="top:295px"><div class="c1"><i class="dot" style="left:29px;top:8px"></i><svg class="ic" style="left:40px;top:3px;" width="20" height="15" viewBox="0 0 20 15" shape-rendering="crispEdges">
<rect x="0" y="0" width="20" height="14" fill="#fff"/><rect x="2" y="3" width="18" height="9" fill="#eaeaea"/>
<path d="M0 1 H20" stroke="#666" stroke-width="2"/><path d="M0.500 0 V14 M0 13.500 H20" stroke="#6e6e6e" stroke-width="1" fill="none"/>
<path d="M8 3.500 L11.500 7 L8 10.500 L4.500 7 Z" fill="#9dc0e2" stroke="#1f70a8" stroke-width="1" shape-rendering="auto"/><rect x="7" y="10" width="2" height="2" fill="#1f70a8"/>
</svg><span id="rn12" class="t" style="left:63.50px;transform:scaleX(0.9814);">Purchasing Document Item Change Date</span></div><span id="rk12" class="k" style="left:422.70px;transform:scaleX(0.9287);">EKPO-AEDAT</span></div>
<div class="row" style="top:317px"><div class="c1"><i class="dot" style="left:29px;top:8px"></i><svg class="ic" style="left:40px;top:3px;" width="20" height="15" viewBox="0 0 20 15" shape-rendering="crispEdges">
<rect x="0" y="0" width="20" height="14" fill="#fff"/><rect x="2" y="3" width="18" height="9" fill="#eaeaea"/>
<path d="M0 1 H20" stroke="#666" stroke-width="2"/><path d="M0.500 0 V14 M0 13.500 H20" stroke="#6e6e6e" stroke-width="1" fill="none"/>
<path d="M8 3.500 L11.500 7 L8 10.500 L4.500 7 Z" fill="#9dc0e2" stroke="#1f70a8" stroke-width="1" shape-rendering="auto"/><rect x="7" y="10" width="2" height="2" fill="#1f70a8"/>
</svg><span id="rn13" class="t" style="left:63.50px;transform:scaleX(0.9882);">Net Order Value in PO Currency</span></div><span id="rk13" class="k" style="left:422.70px;transform:scaleX(0.9158);">EKPO-NETWR</span></div>
<div class="row" style="top:339px"><div class="c1"><i class="dot" style="left:29px;top:8px"></i><svg class="ic" style="left:40px;top:1px;" width="20" height="18" viewBox="0 0 20 18" shape-rendering="crispEdges">
<rect x="0" y="6" width="18" height="11" fill="#fff"/><rect x="2" y="9" width="15" height="6" fill="#eaeaea"/>
<path d="M0.500 17 V6.500 H10 M0 16.500 H17" stroke="#6e6e6e" stroke-width="1" fill="none"/>
<path d="M7.500 9.500 L10 12 L7.500 14.500 L5 12 Z" fill="#5a9bcc" stroke="#1f70a8" stroke-width="1" shape-rendering="auto"/>
<rect x="10" y="0" width="10" height="11" fill="#fff"/><path d="M10.500 0 V10.500 H20" stroke="#7a7a7a" stroke-width="1" fill="none"/><path d="M10 0.500 H20" stroke="#bbb" stroke-width="1"/>
<path d="M12 3 H19" stroke="#5c5c5c" stroke-width="2" fill="none"/><path d="M15.500 3 V9" stroke="#666" stroke-width="2" fill="none"/><rect x="14" y="8" width="3" height="1" fill="#5c5c5c"/><rect x="12" y="4" width="1" height="1" fill="#777"/><rect x="18" y="4" width="1" height="1" fill="#777"/>
</svg><span id="rn14" class="t" style="left:63.50px;transform:scaleX(1.0033);">Item Number of Purchasing Document</span></div><span id="rk14" class="k" style="left:422.70px;transform:scaleX(0.8741);">EKPO-EBELP</span></div>
<div class="row g" style="top:361px"><i class="dn" style="left:10px;top:8px"></i><svg class="ic" style="left:23px;top:5px;" width="21" height="15" viewBox="0 0 21 15">
<path d="M0.500 0.500 H7 L8.500 2.500 H16.500 V6 H0.500 Z" fill="#ffc81e" stroke="#d9501a" stroke-width="1"/>
<path d="M0.500 5 V13.500" stroke="#d9501a" stroke-width="1"/>
<path d="M2.500 5.500 H19.500 L17 13 H0.500 Z" fill="#ffc81e" stroke="#de5a18" stroke-width="1"/>
<path d="M0 14 H17" stroke="#d0421a" stroke-width="2"/>
</svg><span id="rn15" class="t" style="left:47.30px;transform:scaleX(0.9974);">05 Account Assignment in Purchasing Document</span></div>
<div class="row" style="top:383px"><div class="c1"><i class="dot" style="left:29px;top:8px"></i><svg class="ic" style="left:40px;top:1px;" width="20" height="18" viewBox="0 0 20 18" shape-rendering="crispEdges">
<rect x="0" y="6" width="18" height="11" fill="#fff"/><rect x="2" y="9" width="15" height="6" fill="#eaeaea"/>
<path d="M0.500 17 V6.500 H10 M0 16.500 H17" stroke="#6e6e6e" stroke-width="1" fill="none"/>
<path d="M7.500 9.500 L10 12 L7.500 14.500 L5 12 Z" fill="#5a9bcc" stroke="#1f70a8" stroke-width="1" shape-rendering="auto"/>
<rect x="10" y="0" width="10" height="11" fill="#fff"/><path d="M10.500 0 V10.500 H20" stroke="#7a7a7a" stroke-width="1" fill="none"/><path d="M10 0.500 H20" stroke="#bbb" stroke-width="1"/>
<path d="M12 3 H19" stroke="#5c5c5c" stroke-width="2" fill="none"/><path d="M15.500 3 V9" stroke="#666" stroke-width="2" fill="none"/><rect x="14" y="8" width="3" height="1" fill="#5c5c5c"/><rect x="12" y="4" width="1" height="1" fill="#777"/><rect x="18" y="4" width="1" height="1" fill="#777"/>
</svg><span id="rn16" class="t" style="left:63.50px;transform:scaleX(0.9820);">Work Breakdown Structure Element (WBS Element)</span></div><span id="rk16" class="k" style="left:422.70px;transform:scaleX(0.8876);">EKKN-PS_PSP_PNR</span></div>
<div class="row" style="top:405px"><div class="c1"><i class="dot" style="left:29px;top:8px"></i><svg class="ic" style="left:40px;top:1px;" width="20" height="18" viewBox="0 0 20 18" shape-rendering="crispEdges">
<rect x="0" y="6" width="18" height="11" fill="#fff"/><rect x="2" y="9" width="15" height="6" fill="#eaeaea"/>
<path d="M0.500 17 V6.500 H10 M0 16.500 H17" stroke="#6e6e6e" stroke-width="1" fill="none"/>
<path d="M7.500 9.500 L10 12 L7.500 14.500 L5 12 Z" fill="#5a9bcc" stroke="#1f70a8" stroke-width="1" shape-rendering="auto"/>
<rect x="10" y="0" width="10" height="11" fill="#fff"/><path d="M10.500 0 V10.500 H20" stroke="#7a7a7a" stroke-width="1" fill="none"/><path d="M10 0.500 H20" stroke="#bbb" stroke-width="1"/>
<path d="M12 3 H19" stroke="#5c5c5c" stroke-width="2" fill="none"/><path d="M15.500 3 V9" stroke="#666" stroke-width="2" fill="none"/><rect x="14" y="8" width="3" height="1" fill="#5c5c5c"/><rect x="12" y="4" width="1" height="1" fill="#777"/><rect x="18" y="4" width="1" height="1" fill="#777"/>
</svg><span id="rn17" class="t" style="left:63.50px;transform:scaleX(0.9871);">Main Asset Number</span></div><span id="rk17" class="k" style="left:422.70px;transform:scaleX(0.9274);">EKKN-ANLN1</span></div>
<div class="row" style="top:427px"><div class="c1"><i class="dot" style="left:29px;top:8px"></i><svg class="ic" style="left:40px;top:1px;" width="20" height="18" viewBox="0 0 20 18" shape-rendering="crispEdges">
<rect x="0" y="6" width="18" height="11" fill="#fff"/><rect x="2" y="9" width="15" height="6" fill="#eaeaea"/>
<path d="M0.500 17 V6.500 H10 M0 16.500 H17" stroke="#6e6e6e" stroke-width="1" fill="none"/>
<path d="M7.500 9.500 L10 12 L7.500 14.500 L5 12 Z" fill="#5a9bcc" stroke="#1f70a8" stroke-width="1" shape-rendering="auto"/>
<rect x="10" y="0" width="10" height="11" fill="#fff"/><path d="M10.500 0 V10.500 H20" stroke="#7a7a7a" stroke-width="1" fill="none"/><path d="M10 0.500 H20" stroke="#bbb" stroke-width="1"/>
<path d="M12 3 H19" stroke="#5c5c5c" stroke-width="2" fill="none"/><path d="M15.500 3 V9" stroke="#666" stroke-width="2" fill="none"/><rect x="14" y="8" width="3" height="1" fill="#5c5c5c"/><rect x="12" y="4" width="1" height="1" fill="#777"/><rect x="18" y="4" width="1" height="1" fill="#777"/>
</svg><span id="rn18" class="t" style="left:63.50px;transform:scaleX(0.9578);">Cost Center</span></div><span id="rk18" class="k" style="left:422.70px;transform:scaleX(0.9011);">EKKN-KOSTL</span></div>
<div class="row" style="top:449px"><div class="c1"><i class="dot" style="left:29px;top:8px"></i><svg class="ic" style="left:40px;top:1px;" width="20" height="18" viewBox="0 0 20 18" shape-rendering="crispEdges">
<rect x="0" y="6" width="18" height="11" fill="#fff"/><rect x="2" y="9" width="15" height="6" fill="#eaeaea"/>
<path d="M0.500 17 V6.500 H10 M0 16.500 H17" stroke="#6e6e6e" stroke-width="1" fill="none"/>
<path d="M7.500 9.500 L10 12 L7.500 14.500 L5 12 Z" fill="#5a9bcc" stroke="#1f70a8" stroke-width="1" shape-rendering="auto"/>
<rect x="10" y="0" width="10" height="11" fill="#fff"/><path d="M10.500 0 V10.500 H20" stroke="#7a7a7a" stroke-width="1" fill="none"/><path d="M10 0.500 H20" stroke="#bbb" stroke-width="1"/>
<path d="M12 3 H19" stroke="#5c5c5c" stroke-width="2" fill="none"/><path d="M15.500 3 V9" stroke="#666" stroke-width="2" fill="none"/><rect x="14" y="8" width="3" height="1" fill="#5c5c5c"/><rect x="12" y="4" width="1" height="1" fill="#777"/><rect x="18" y="4" width="1" height="1" fill="#777"/>
</svg><span id="rn19" class="t" style="left:63.50px;transform:scaleX(1.0061);">G/L Account Number</span></div><span id="rk19" class="k" style="left:422.70px;transform:scaleX(0.9200);">EKKN-SAKTO</span></div>
<div class="row g" style="top:471px"><i class="dn" style="left:10px;top:8px"></i><svg class="ic" style="left:23px;top:5px;" width="21" height="15" viewBox="0 0 21 15">
<path d="M0.500 0.500 H7 L8.500 2.500 H16.500 V6 H0.500 Z" fill="#ffc81e" stroke="#d9501a" stroke-width="1"/>
<path d="M0.500 5 V13.500" stroke="#d9501a" stroke-width="1"/>
<path d="M2.500 5.500 H19.500 L17 13 H0.500 Z" fill="#ffc81e" stroke="#de5a18" stroke-width="1"/>
<path d="M0 14 H17" stroke="#d0421a" stroke-width="2"/>
</svg><span id="rn20" class="t" style="left:47.30px;transform:scaleX(0.9738);">06 Purchase Requisition</span></div>
<div class="row" style="top:493px"><div class="c1"><i class="dot" style="left:29px;top:8px"></i><svg class="ic" style="left:40px;top:3px;" width="20" height="15" viewBox="0 0 20 15" shape-rendering="crispEdges">
<rect x="0" y="0" width="20" height="14" fill="#fff"/><rect x="2" y="3" width="18" height="9" fill="#eaeaea"/>
<path d="M0 1 H20" stroke="#666" stroke-width="2"/><path d="M0.500 0 V14 M0 13.500 H20" stroke="#6e6e6e" stroke-width="1" fill="none"/>
<path d="M8 3.500 L11.500 7 L8 10.500 L4.500 7 Z" fill="#9dc0e2" stroke="#1f70a8" stroke-width="1" shape-rendering="auto"/><rect x="7" y="10" width="2" height="2" fill="#1f70a8"/>
</svg><span id="rn21" class="t" style="left:63.50px;transform:scaleX(0.9875);">Name of Person who Created the Object</span></div><span id="rk21" class="k" style="left:422.70px;transform:scaleX(0.9314);">EBAN-ERNAM</span></div>
<div class="row" style="top:515px"><div class="c1"><i class="dot" style="left:29px;top:8px"></i><svg class="ic" style="left:40px;top:1px;" width="20" height="18" viewBox="0 0 20 18" shape-rendering="crispEdges">
<rect x="0" y="6" width="18" height="11" fill="#fff"/><rect x="2" y="9" width="15" height="6" fill="#eaeaea"/>
<path d="M0.500 17 V6.500 H10 M0 16.500 H17" stroke="#6e6e6e" stroke-width="1" fill="none"/>
<path d="M7.500 9.500 L10 12 L7.500 14.500 L5 12 Z" fill="#5a9bcc" stroke="#1f70a8" stroke-width="1" shape-rendering="auto"/>
<rect x="10" y="0" width="10" height="11" fill="#fff"/><path d="M10.500 0 V10.500 H20" stroke="#7a7a7a" stroke-width="1" fill="none"/><path d="M10 0.500 H20" stroke="#bbb" stroke-width="1"/>
<path d="M12 3 H19" stroke="#5c5c5c" stroke-width="2" fill="none"/><path d="M15.500 3 V9" stroke="#666" stroke-width="2" fill="none"/><rect x="14" y="8" width="3" height="1" fill="#5c5c5c"/><rect x="12" y="4" width="1" height="1" fill="#777"/><rect x="18" y="4" width="1" height="1" fill="#777"/>
</svg><span id="rn22" class="t" style="left:63.50px;transform:scaleX(0.9932);">Item Number of Purchase Requisition</span></div><span id="rk22" class="k" style="left:422.70px;transform:scaleX(0.9126);">EBAN-BNFPO</span></div>
<div class="row" style="top:537px"><div class="c1"><i class="dot" style="left:29px;top:8px"></i><svg class="ic" style="left:40px;top:3px;" width="20" height="15" viewBox="0 0 20 15" shape-rendering="crispEdges">
<rect x="0" y="0" width="20" height="14" fill="#fff"/><rect x="2" y="3" width="18" height="9" fill="#eaeaea"/>
<path d="M0 1 H20" stroke="#666" stroke-width="2"/><path d="M0.500 0 V14 M0 13.500 H20" stroke="#6e6e6e" stroke-width="1" fill="none"/>
<path d="M8 3.500 L11.500 7 L8 10.500 L4.500 7 Z" fill="#9dc0e2" stroke="#1f70a8" stroke-width="1" shape-rendering="auto"/><rect x="7" y="10" width="2" height="2" fill="#1f70a8"/>
</svg><span id="rn23" class="t" style="left:63.50px;transform:scaleX(0.9788);">Purchase Requisition Number</span></div><span id="rk23" class="k" style="left:422.70px;transform:scaleX(0.9288);">EBAN-BANFN</span></div>
<div class="row" style="top:559px"><div class="c1"><i class="dot" style="left:29px;top:8px"></i><svg class="ic" style="left:40px;top:3px;" width="20" height="15" viewBox="0 0 20 15" shape-rendering="crispEdges">
<rect x="0" y="0" width="20" height="14" fill="#fff"/><rect x="2" y="3" width="18" height="9" fill="#eaeaea"/>
<path d="M0 1 H20" stroke="#666" stroke-width="2"/><path d="M0.500 0 V14 M0 13.500 H20" stroke="#6e6e6e" stroke-width="1" fill="none"/>
<path d="M8 3.500 L11.500 7 L8 10.500 L4.500 7 Z" fill="#9dc0e2" stroke="#1f70a8" stroke-width="1" shape-rendering="auto"/><rect x="7" y="10" width="2" height="2" fill="#1f70a8"/>
</svg><span id="rn24" class="t" style="left:63.50px;transform:scaleX(0.9536);">Purchase Requisition Release Date</span></div><span id="rk24" class="k" style="left:422.70px;transform:scaleX(0.9126);">EBAN-FRGDT</span></div>
<i class="vline" style="left:420px;top:31px;height:579px"></i><div id="sb"><i class="al" style="left:7px"></i><i class="ar" style="left:29px"></i><div class="thumb"><b></b></div><i class="al" style="left:386px"></i><i class="ar" style="left:408px"></i></div><div id="sbr"></div>
</div>
<div id="hband"><i style="left:504px"></i><i style="left:512px"></i><i style="left:520px"></i><i style="left:528px"></i><i style="left:536px"></i></div>
</div>
<div id="ledge"></div>
</body></html>
